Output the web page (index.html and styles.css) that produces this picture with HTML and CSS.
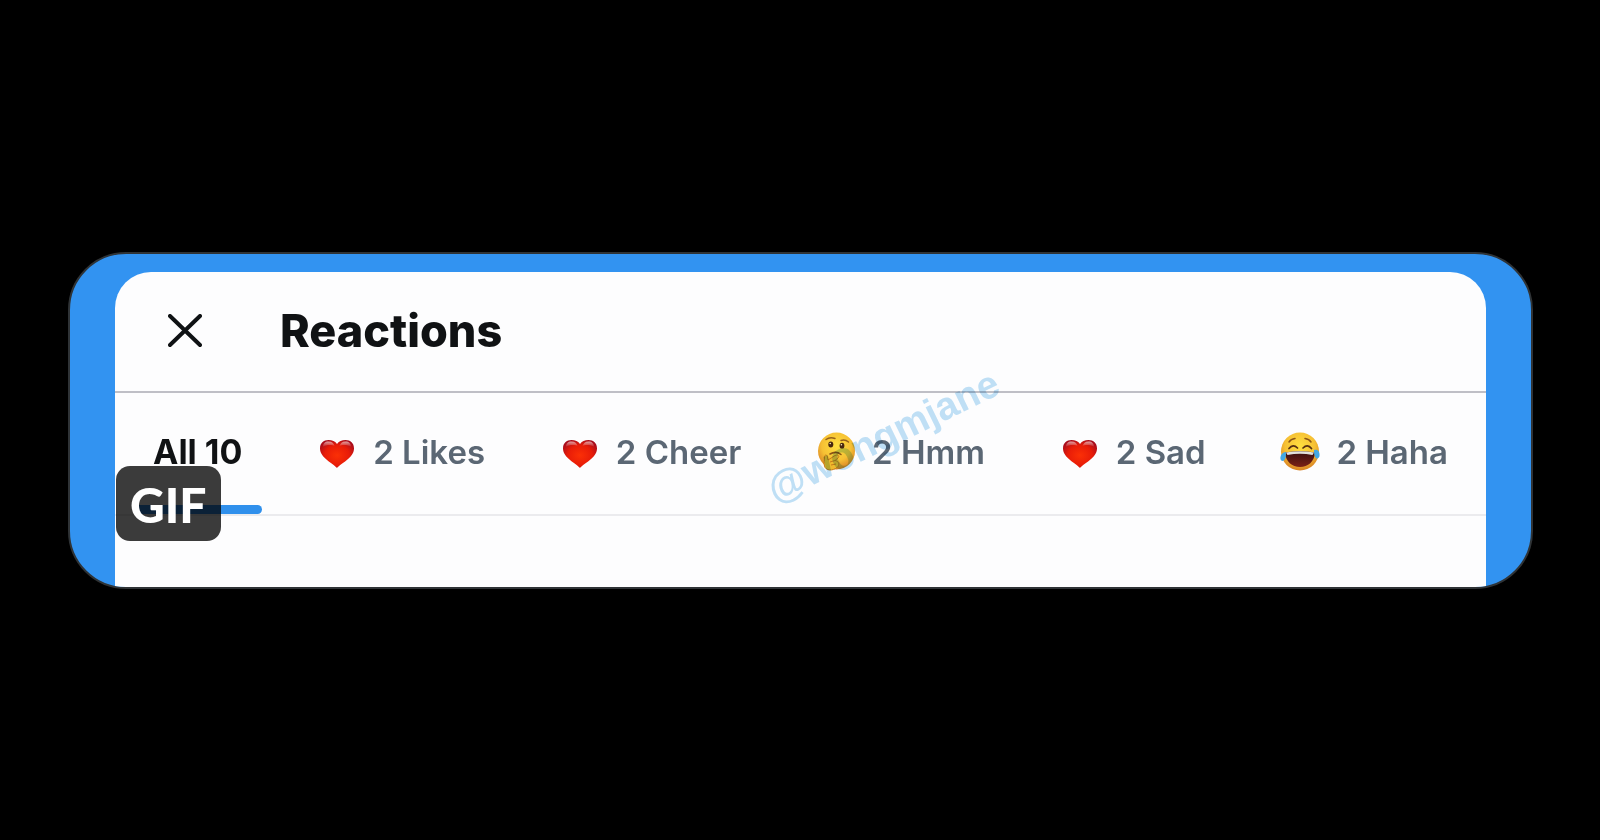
FILE: index.html
```html
<!DOCTYPE html>
<html lang="en">
<head>
<meta charset="utf-8">
<title>Reactions</title>
<link rel="stylesheet" href="styles.css">
</head>
<body>
<svg class="defs" aria-hidden="true">
  <defs>
    <radialGradient id="heartFill" cx="50%" cy="55%" r="60%">
      <stop offset="0" stop-color="#fb3006"/><stop offset=".6" stop-color="#e81c08"/><stop offset="1" stop-color="#a80d1c"/>
    </radialGradient>
    <linearGradient id="shine" x1="0" y1="0" x2="0" y2="1">
      <stop offset="0" stop-color="#fff" stop-opacity=".6"/><stop offset="1" stop-color="#fff" stop-opacity="0"/>
    </linearGradient>
    <radialGradient id="face" cx="50%" cy="36%" r="66%">
      <stop offset="0" stop-color="#ffe03f"/><stop offset=".6" stop-color="#f6c034"/><stop offset="1" stop-color="#d67c22"/>
    </radialGradient>
    <linearGradient id="mouth" x1="0" y1="0" x2="0" y2="1">
      <stop offset="0" stop-color="#35100f"/><stop offset="1" stop-color="#7c2016"/>
    </linearGradient>
    <symbol id="heart" viewBox="0 0 40 40">
      <path d="M20 36C17 32 3 26 3 16.500C3 11 6.500 8 11.500 8C15 8 18.500 9.500 20 12C21.500 9.500 25 8 28.500 8C33.500 8 37 11 37 16.500C37 26 23 32 20 36Z" fill="url(#heartFill)"/>
      <path d="M6 15C6 11.500 8 9.500 11.500 9.500C15 9.500 17 11.500 17.500 14C15 12.500 9 12.500 6 15Z" fill="url(#shine)"/>
      <path d="M22.500 14C23.500 11.500 25 9.500 28.500 9.500C32 9.500 34 11.500 34 15C31 12.500 25 12.500 22.500 14Z" fill="url(#shine)"/>
    </symbol>
    <symbol id="think" viewBox="0 0 40 40">
      <circle cx="20.500" cy="19" r="18.500" fill="url(#face)"/>
      <path d="M10 7.500Q14 4.500 19 6.500M25 8.500Q29 7 32.500 10" fill="none" stroke="#95601b" stroke-width="1.400" stroke-linecap="round"/>
      <ellipse cx="14.800" cy="12.500" rx="2.500" ry="3" fill="#48270f"/>
      <ellipse cx="26" cy="13.700" rx="2.400" ry="2.900" fill="#48270f"/>
      <circle cx="14.200" cy="11.500" r=".8" fill="#fff3bc"/><circle cx="25.400" cy="12.700" r=".8" fill="#fff3bc"/>
      <path d="M14 22Q20 18.500 25 22.500" fill="none" stroke="#8a5316" stroke-width="1.500" stroke-linecap="round"/>
      <path d="M8.500 25C8.500 22.500 11 22.500 11.500 25L12 28L19 23.500C22 22 24 24 22 26L19 28.500C23 29 24 33 21 35.500C17 39 9.500 39 8.500 34C7.500 31 8.500 28 8.500 25Z" fill="#efb92d" stroke="#c67a1b" stroke-width="1"/>
      <path d="M14 30L19 28.500M15 33L20 32" fill="none" stroke="#c67a1b"/>
    </symbol>
    <symbol id="laugh" viewBox="0 0 40 40">
      <circle cx="20" cy="19.500" r="19" fill="url(#face)"/>
      <path d="M9 10Q11 7 15 6.500M25 6.500Q29 7 31 10" fill="none" stroke="#8c5515" stroke-width="1.500" stroke-linecap="round"/>
      <path d="M9 16.500Q13 11.500 17.500 16M23 16Q27.500 11.500 31.500 16.500" fill="none" stroke="#563012" stroke-width="1.700" stroke-linecap="round"/>
      <path d="M5 20.500Q20 17.500 35 20.500C34.500 29.500 28 35 20 35C12 35 5.500 29.500 5 20.500Z" fill="url(#mouth)"/>
      <path d="M6 20.500Q20 18 34 20.500L32.500 23Q20 20.500 7.500 23Z" fill="#e2e1dc"/>
      <path d="M6 20C2 20 0 24 .5 27C1 29.500 4 29.500 5 27C6 25 6 22.500 6 20Z" fill="#43a8e5"/>
      <path d="M34 18C38 17 40 20 39.500 24C39 27 36 27.500 35 24.500C34 22.500 34 20 34 18Z" fill="#43a8e5"/>
    </symbol>
  </defs>
</svg>
<main class="card">
  <section class="panel">
    <header class="header">
      <button class="close" type="button" aria-label="Close">
        <svg class="close-icon" viewBox="0 0 34 34"><path d="M2 2L32 31M32 2L2 31"/></svg>
      </button>
      <h1 class="title">Reactions</h1>
    </header>
    <nav class="tabs" aria-label="Reaction types">
      <button class="tab tab-active" type="button">All 10</button>
      <button class="tab" type="button"><svg class="emoji"><use href="#heart"/></svg>2 Likes</button>
      <button class="tab" type="button"><svg class="emoji"><use href="#heart"/></svg>2 Cheer</button>
      <button class="tab" type="button"><svg class="emoji"><use href="#think"/></svg>2 Hmm</button>
      <button class="tab" type="button"><svg class="emoji"><use href="#heart"/></svg>2 Sad</button>
      <button class="tab" type="button"><svg class="emoji"><use href="#laugh"/></svg>2 Haha</button>
    </nav>
    <div class="list"></div>
    <span class="watermark">@wongmjane</span>
  </section>
  <span class="badge">GIF</span>
</main>
</body>
</html>
```
FILE: styles.css
```css
* {
  box-sizing: border-box;
}

body {
  margin: 0;
  min-height: 100vh;
  padding: 0 67px 0 68px;
  display: flex;
  align-items: center;
  background: #000;
  font-family: Inter, "Liberation Sans", sans-serif;
}

.defs {
  position: absolute;
  width: 0;
  height: 0;
}

.card {
  position: relative;
  flex: 1;
  padding: 18px 45px 0;
  border: 2px solid #2f3336;
  border-radius: 58px;
  background: #3293f1;
  overflow: hidden;
}

.panel {
  position: relative;
  border-radius: 36px 36px 0 0;
  background: #fdfdfe;
}

.header {
  display: flex;
  align-items: center;
  gap: 78px;
  height: 121px;
  padding: 0 53px;
  border-bottom: 2px solid #bfbfc6;
}

.close {
  display: flex;
  padding: 0;
  border: 0;
  background: none;
}

.close-icon {
  width: 34px;
  height: 34px;
  fill: none;
  stroke: #0f1214;
  stroke-width: 4;
  stroke-linecap: round;
}

.title {
  margin: 0;
  color: #101214;
  font-size: 45px;
  font-weight: 800;
  line-height: 56px;
}

.tabs {
  display: flex;
  justify-content: space-between;
  height: 123px;
  padding: 0 18px;
  border-bottom: 2px solid #ebebee;
}

.tab {
  position: relative;
  display: flex;
  align-items: center;
  gap: 16px;
  padding: 0 20px 3px;
  border: 0;
  background: none;
  color: #5b6774;
  font-family: inherit;
  font-size: 33px;
  font-weight: 600;
  line-height: 40px;
  white-space: nowrap;
}

.tab-active {
  color: #101214;
  font-size: 34px;
  font-weight: 700;
}

.tab-active::after {
  content: "";
  position: absolute;
  right: 0;
  bottom: 0;
  left: 0;
  height: 9px;
  border-radius: 5px;
  background: #3090ec;
}

.emoji {
  width: 40px;
  height: 40px;
}

.list {
  height: 71px;
}

.watermark {
  position: absolute;
  top: 164px;
  left: 56%;
  color: rgba(120, 190, 235, 0.46);
  font-family: "Liberation Sans", sans-serif;
  font-size: 39px;
  font-weight: 700;
  line-height: 1;
  mix-blend-mode: multiply;
  transform: translate(-50%, -50%) rotate(-26deg);
  pointer-events: none;
}

.badge {
  position: absolute;
  bottom: 46px;
  left: 46px;
  padding: 2px 14px 0;
  border-radius: 14px;
  background: rgba(0, 0, 0, 0.77);
  color: #fff;
  font-family: Lato, sans-serif;
  font-size: 48px;
  font-weight: 900;
  line-height: 73px;
}
```
